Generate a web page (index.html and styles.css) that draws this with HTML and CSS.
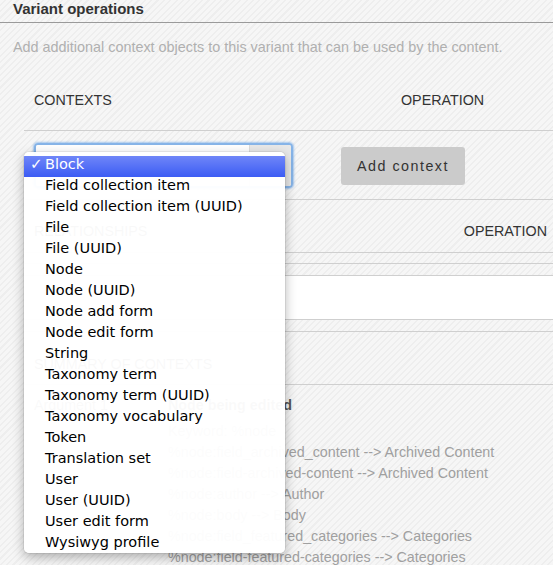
FILE: index.html
```html
<!DOCTYPE html>
<html>
<head>
<meta charset="utf-8">
<title>Variant operations</title>
<link rel="stylesheet" href="styles.css">
</head>
<body>
<div class="page">
  <div class="legend">Variant operations</div>
  <div class="description">Add additional context objects to this variant that can be used by the content.</div>

  <div class="table">
    <div class="thead head1"><span class="col-a">CONTEXTS</span><span class="col-b">OPERATION</span></div>
    <div class="addrow">
      <div class="select"><span class="select-field"></span><span class="select-arrow"></span></div>
      <button class="btn">Add context</button>
    </div>
  </div>

  <div class="table">
    <div class="thead head2"><span class="col-a">RELATIONSHIPS</span><span class="col-b2">OPERATION</span></div>
    <div class="spacer s10"></div>
    <div class="spacer s11"></div>
    <div class="whiterow"></div>
    <div class="spacer s11"></div>
  </div>

  <div class="summary">
    <div class="summary-title">SUMMARY OF CONTEXTS</div>
    <div class="summary-body">
      <div class="arg"><span class="arg-label">Argument 1</span><span class="arg-value">Node being edited</span></div>
      <div class="kw"><span class="arg-label"></span><span class="kw-value">Keyword: %node</span></div>
      <ul class="rels">
        <li>%node:field_archived_content --&gt; Archived Content</li>
        <li>%node:field-archived-content --&gt; Archived Content</li>
        <li>%node:author --&gt; Author</li>
        <li>%node:body --&gt; Body</li>
        <li>%node:field_featured_categories --&gt; Categories</li>
        <li>%node:field-featured-categories --&gt; Categories</li>
      </ul>
    </div>
  </div>

  <ul class="menu">
    <li class="item selected"><span class="check">✓</span>Block</li>
    <li class="item">Field collection item</li>
    <li class="item">Field collection item (UUID)</li>
    <li class="item">File</li>
    <li class="item">File (UUID)</li>
    <li class="item">Node</li>
    <li class="item">Node (UUID)</li>
    <li class="item">Node add form</li>
    <li class="item">Node edit form</li>
    <li class="item">String</li>
    <li class="item">Taxonomy term</li>
    <li class="item">Taxonomy term (UUID)</li>
    <li class="item">Taxonomy vocabulary</li>
    <li class="item">Token</li>
    <li class="item">Translation set</li>
    <li class="item">User</li>
    <li class="item">User (UUID)</li>
    <li class="item">User edit form</li>
    <li class="item">Wysiwyg profile</li>
  </ul>
</div>
</body>
</html>
```

FILE: styles.css
```css
html, body {
  margin: 0;
  padding: 0;
}

.page {
  position: relative;
  width: 553px;
  height: 565px;
  overflow: hidden;
  font-family: "Liberation Sans", Arial, sans-serif;
  color: #333;
  background-color: #f4f4f4;
  background-image: repeating-linear-gradient(135deg, #f6f6f6 0, #f6f6f6 3px, #eeeeee 3px, #eeeeee 4.5px);
}

.legend {
  height: 22px;
  padding-left: 13px;
  font-weight: bold;
  font-size: 15px;
  line-height: 17px;
  color: #333;
  border-bottom: 1px solid #9a9a9a;
}

.description {
  height: 43px;
  box-sizing: border-box;
  padding: 15px 13px 0;
  font-size: 14.4px;
  line-height: 18px;
  color: #b0b0b0;
  white-space: nowrap;
}

.table {
  margin-left: 24px;
}

.thead {
  display: flex;
  box-sizing: border-box;
  font-size: 14.3px;
  line-height: 18px;
  color: #333;
  border-bottom: 1px solid #cfcfcf;
  padding-left: 10px;
}

.head1 {
  height: 65px;
  padding-top: 25px;
}

.head1 .col-a {
  width: 367px;
}

.head2 {
  height: 53px;
  padding-top: 22px;
  justify-content: space-between;
  padding-right: 6px;
}

.addrow {
  display: flex;
  align-items: flex-start;
  gap: 48px;
  height: 69px;
  box-sizing: border-box;
  padding: 12px 0 0 10px;
  border-bottom: 1px solid #cfcfcf;
}

.select {
  display: flex;
  width: 259px;
  height: 45px;
  box-sizing: border-box;
  border: 2px solid #86b4e8;
  border-radius: 4px;
  box-shadow: 0 0 2px 1px rgba(110, 165, 230, 0.6);
  overflow: hidden;
}

.select-field {
  flex: 1;
  background: #fff;
}

.select-arrow {
  width: 41px;
  background: #e8e8e8;
  border-left: 1px solid #dcdcdc;
}

.btn {
  margin-top: 4px;
  width: 124px;
  height: 38px;
  border: 0;
  border-radius: 3px;
  background: #cbcbcb;
  font-family: "Liberation Sans", Arial, sans-serif;
  font-size: 14.3px;
  letter-spacing: 1.5px;
  color: #333;
  padding: 0;
}

.spacer {
  border-bottom: 1px solid #cfcfcf;
}

.s10 {
  height: 10px;
}

.s11 {
  height: 11px;
}

.whiterow {
  height: 43px;
  background: #fff;
  border-bottom: 1px solid #cfcfcf;
}

.summary {
  margin-left: 24px;
}

.summary-title {
  height: 53px;
  box-sizing: border-box;
  padding: 23px 0 0 10px;
  font-size: 14.3px;
  line-height: 18px;
  color: #333;
  border-bottom: 1px solid #cfcfcf;
}

.summary-body {
  padding: 10px 0 0 10px;
  font-size: 14.3px;
  line-height: 21px;
  color: #a0a0a0;
}

.arg, .kw {
  display: flex;
}

.arg {
  margin-bottom: 5px;
}

.arg-label {
  width: 134px;
  color: #555;
}

.arg-value {
  color: #555;
  font-weight: bold;
}

.rels {
  list-style: none;
  margin: 0;
  padding: 0 0 0 134px;
}

.menu {
  position: absolute;
  left: 24px;
  top: 152px;
  width: 261px;
  height: 401px;
  box-sizing: border-box;
  margin: 0;
  padding: 4px 0 0;
  list-style: none;
  overflow: hidden;
  background: rgba(255, 255, 255, 0.97);
  border-radius: 5px;
  box-shadow: 0 4px 12px rgba(0, 0, 0, 0.3), 0 0 0 1px rgba(0, 0, 0, 0.06);
  font-family: "DejaVu Sans", Verdana, sans-serif;
  font-size: 14.5px;
  color: #000;
}

.item {
  position: relative;
  height: 21px;
  box-sizing: border-box;
  line-height: 17px;
  padding-left: 21px;
  white-space: nowrap;
}

.selected {
  color: #fff;
  background: linear-gradient(#6f86f8, #3c5cf4);
}

.check {
  position: absolute;
  left: 6px;
  top: 0;
  font-size: 15px;
}
```
